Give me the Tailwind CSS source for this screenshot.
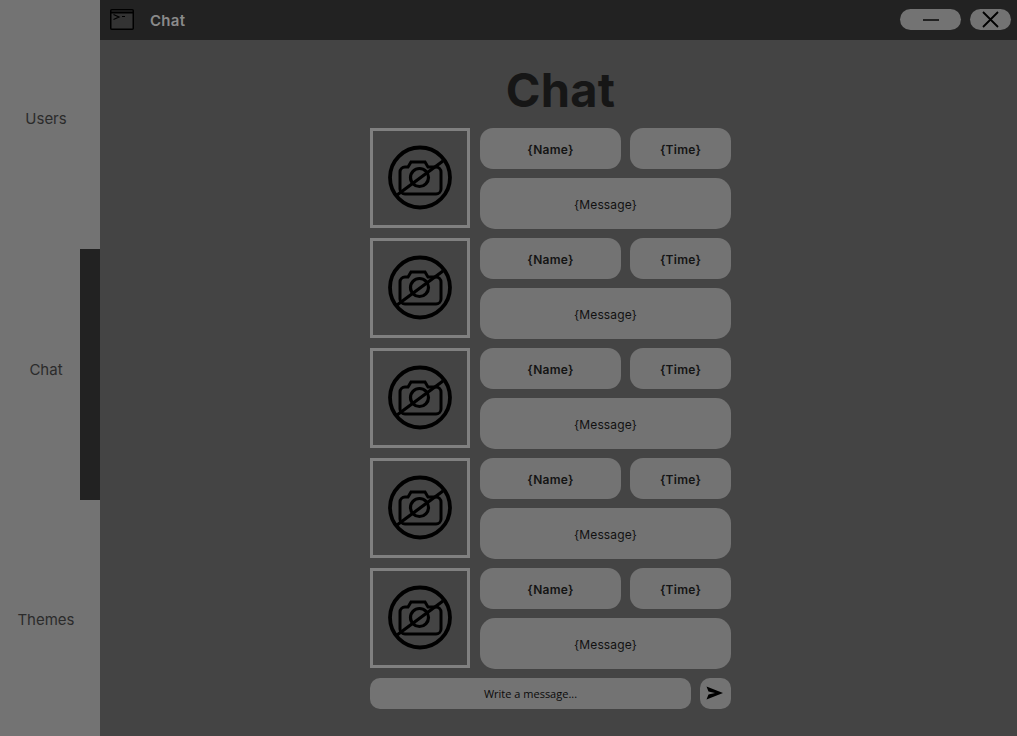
<!DOCTYPE html>
<html lang="en">
<head>
    <meta charset="UTF-8">
    <title>Chat</title>
    <script src="https://cdn.jsdelivr.net/npm/@tailwindcss/browser@4"></script>
</head>
<body class="bg-[#444444] font-['Inter','Noto_Sans',sans-serif] overflow-hidden">
    <div class="flex h-[736px] w-[1017px]">
        <!-- sidebar -->
        <nav class="w-[100px] h-full bg-[#737373] flex flex-col text-[15px] text-[#2b2b2b] shrink-0">
            <div class="h-[249px] flex items-center pr-2 pb-[11px]"><span class="w-full text-center">Users</span></div>
            <div class="h-[251px] flex items-center pr-2 pb-[9px] shadow-[inset_-20px_0_0_#222222]"><span class="w-full text-center">Chat</span></div>
            <div class="flex-1 flex items-center pr-2 pt-[4px]"><span class="w-full text-center">Themes</span></div>
        </nav>

        <div class="flex-1 flex flex-col">
            <!-- title bar -->
            <header class="h-10 bg-[#222222] flex items-center pl-[10px] pr-[6px] pb-[1px] shrink-0">
                <svg width="24" height="21" viewBox="0 0 24 21">
                    <rect x="0.75" y="0.75" width="22.5" height="19.5" rx="1" fill="#333333" stroke="#000" stroke-width="1.5"/>
                    <path d="M1 3.500H23" stroke="#000" stroke-width="2"/>
                    <path d="M3.500 5.500L9 8L3.500 10.500" fill="none" stroke="#000" stroke-width="1.200"/>
                    <path d="M12 7.500H15" stroke="#000" stroke-width="1"/>
                </svg>
                <span class="ml-4 mt-[4px] text-[15px] tracking-[0.02em] font-semibold text-[#8a8a8a]">Chat</span>
                <button class="ml-auto w-[61px] h-[21px] rounded-full bg-[#737373] flex items-center justify-center">
                    <span class="block w-4 h-[2px] bg-[#222222]"></span>
                </button>
                <button class="ml-[9px] w-[41px] h-[21px] rounded-full bg-[#737373] flex items-center justify-center">
                    <svg width="17" height="17" viewBox="0 0 17 17"><path d="M1 1L16 16M16 1L1 16" stroke="#000" stroke-width="1.800"/></svg>
                </button>
            </header>

            <!-- chat -->
            <main class="flex-1 pl-[270px]">
                <div class="w-[361px]">
                    <h1 class="h-[88px] pt-[20px] pl-5 text-center text-[47px] tracking-[0.005em] leading-[60px] font-bold text-[#161616]">Chat</h1>
                    <div class="flex flex-col gap-[10px]">
                        <div class="flex gap-[10px] h-[100px]">
                            <div class="w-[100px] h-[100px] border-[3px] border-[#808080] flex items-center justify-center shrink-0">
                                <svg width="66" height="66" viewBox="0 0 66 66" fill="none" stroke="#000">
                                    <circle cx="33" cy="32.500" r="30" stroke-width="3.800"/>
                                    <path d="M13 27a5 5 0 0 1 5-5h3l3-5h14l3 5h8a5 5 0 0 1 5 5v17a5 5 0 0 1-5 5H18a5 5 0 0 1-5-5z" stroke-width="3"/>
                                    <circle cx="32.500" cy="32.500" r="9" stroke-width="3.200"/>
                                    <path d="M10 50L56 16" stroke-width="3.200"/>
                                </svg>
                            </div>
                            <div class="flex-1 flex flex-col gap-[9px]">
                                <div class="flex gap-[9px]">
                                    <div class="w-[141px] h-[41px] shrink-0 rounded-[13px] bg-[#737373] flex items-center justify-center pt-[2px] text-[12px] tracking-[0.02em] font-semibold text-[#141414]">{Name}</div>
                                    <div class="flex-1 h-[41px] rounded-[13px] bg-[#737373] flex items-center justify-center pt-[2px] text-[12px] tracking-[0.02em] font-semibold text-[#141414]">{Time}</div>
                                </div>
                                <div class="h-[51px] shrink-0 rounded-[15px] bg-[#737373] flex items-center justify-center pt-[2px] text-[12px] tracking-[0.01em] text-[#111111]">{Message}</div>
                            </div>
                        </div>
                        <div class="flex gap-[10px] h-[100px]">
                            <div class="w-[100px] h-[100px] border-[3px] border-[#808080] flex items-center justify-center shrink-0">
                                <svg width="66" height="66" viewBox="0 0 66 66" fill="none" stroke="#000">
                                    <circle cx="33" cy="32.500" r="30" stroke-width="3.800"/>
                                    <path d="M13 27a5 5 0 0 1 5-5h3l3-5h14l3 5h8a5 5 0 0 1 5 5v17a5 5 0 0 1-5 5H18a5 5 0 0 1-5-5z" stroke-width="3"/>
                                    <circle cx="32.500" cy="32.500" r="9" stroke-width="3.200"/>
                                    <path d="M10 50L56 16" stroke-width="3.200"/>
                                </svg>
                            </div>
                            <div class="flex-1 flex flex-col gap-[9px]">
                                <div class="flex gap-[9px]">
                                    <div class="w-[141px] h-[41px] shrink-0 rounded-[13px] bg-[#737373] flex items-center justify-center pt-[2px] text-[12px] tracking-[0.02em] font-semibold text-[#141414]">{Name}</div>
                                    <div class="flex-1 h-[41px] rounded-[13px] bg-[#737373] flex items-center justify-center pt-[2px] text-[12px] tracking-[0.02em] font-semibold text-[#141414]">{Time}</div>
                                </div>
                                <div class="h-[51px] shrink-0 rounded-[15px] bg-[#737373] flex items-center justify-center pt-[2px] text-[12px] tracking-[0.01em] text-[#111111]">{Message}</div>
                            </div>
                        </div>
                        <div class="flex gap-[10px] h-[100px]">
                            <div class="w-[100px] h-[100px] border-[3px] border-[#808080] flex items-center justify-center shrink-0">
                                <svg width="66" height="66" viewBox="0 0 66 66" fill="none" stroke="#000">
                                    <circle cx="33" cy="32.500" r="30" stroke-width="3.800"/>
                                    <path d="M13 27a5 5 0 0 1 5-5h3l3-5h14l3 5h8a5 5 0 0 1 5 5v17a5 5 0 0 1-5 5H18a5 5 0 0 1-5-5z" stroke-width="3"/>
                                    <circle cx="32.500" cy="32.500" r="9" stroke-width="3.200"/>
                                    <path d="M10 50L56 16" stroke-width="3.200"/>
                                </svg>
                            </div>
                            <div class="flex-1 flex flex-col gap-[9px]">
                                <div class="flex gap-[9px]">
                                    <div class="w-[141px] h-[41px] shrink-0 rounded-[13px] bg-[#737373] flex items-center justify-center pt-[2px] text-[12px] tracking-[0.02em] font-semibold text-[#141414]">{Name}</div>
                                    <div class="flex-1 h-[41px] rounded-[13px] bg-[#737373] flex items-center justify-center pt-[2px] text-[12px] tracking-[0.02em] font-semibold text-[#141414]">{Time}</div>
                                </div>
                                <div class="h-[51px] shrink-0 rounded-[15px] bg-[#737373] flex items-center justify-center pt-[2px] text-[12px] tracking-[0.01em] text-[#111111]">{Message}</div>
                            </div>
                        </div>
                        <div class="flex gap-[10px] h-[100px]">
                            <div class="w-[100px] h-[100px] border-[3px] border-[#808080] flex items-center justify-center shrink-0">
                                <svg width="66" height="66" viewBox="0 0 66 66" fill="none" stroke="#000">
                                    <circle cx="33" cy="32.500" r="30" stroke-width="3.800"/>
                                    <path d="M13 27a5 5 0 0 1 5-5h3l3-5h14l3 5h8a5 5 0 0 1 5 5v17a5 5 0 0 1-5 5H18a5 5 0 0 1-5-5z" stroke-width="3"/>
                                    <circle cx="32.500" cy="32.500" r="9" stroke-width="3.200"/>
                                    <path d="M10 50L56 16" stroke-width="3.200"/>
                                </svg>
                            </div>
                            <div class="flex-1 flex flex-col gap-[9px]">
                                <div class="flex gap-[9px]">
                                    <div class="w-[141px] h-[41px] shrink-0 rounded-[13px] bg-[#737373] flex items-center justify-center pt-[2px] text-[12px] tracking-[0.02em] font-semibold text-[#141414]">{Name}</div>
                                    <div class="flex-1 h-[41px] rounded-[13px] bg-[#737373] flex items-center justify-center pt-[2px] text-[12px] tracking-[0.02em] font-semibold text-[#141414]">{Time}</div>
                                </div>
                                <div class="h-[51px] shrink-0 rounded-[15px] bg-[#737373] flex items-center justify-center pt-[2px] text-[12px] tracking-[0.01em] text-[#111111]">{Message}</div>
                            </div>
                        </div>
                        <div class="flex gap-[10px] h-[100px]">
                            <div class="w-[100px] h-[100px] border-[3px] border-[#808080] flex items-center justify-center shrink-0">
                                <svg width="66" height="66" viewBox="0 0 66 66" fill="none" stroke="#000">
                                    <circle cx="33" cy="32.500" r="30" stroke-width="3.800"/>
                                    <path d="M13 27a5 5 0 0 1 5-5h3l3-5h14l3 5h8a5 5 0 0 1 5 5v17a5 5 0 0 1-5 5H18a5 5 0 0 1-5-5z" stroke-width="3"/>
                                    <circle cx="32.500" cy="32.500" r="9" stroke-width="3.200"/>
                                    <path d="M10 50L56 16" stroke-width="3.200"/>
                                </svg>
                            </div>
                            <div class="flex-1 flex flex-col gap-[9px]">
                                <div class="flex gap-[9px]">
                                    <div class="w-[141px] h-[41px] shrink-0 rounded-[13px] bg-[#737373] flex items-center justify-center pt-[2px] text-[12px] tracking-[0.02em] font-semibold text-[#141414]">{Name}</div>
                                    <div class="flex-1 h-[41px] rounded-[13px] bg-[#737373] flex items-center justify-center pt-[2px] text-[12px] tracking-[0.02em] font-semibold text-[#141414]">{Time}</div>
                                </div>
                                <div class="h-[51px] shrink-0 rounded-[15px] bg-[#737373] flex items-center justify-center pt-[2px] text-[12px] tracking-[0.01em] text-[#111111]">{Message}</div>
                            </div>
                        </div>
                    </div>
                    <!-- input -->
                    <div class="flex gap-[9px] mt-[10px]">
                        <div class="w-[321px] h-[31px] rounded-[10px] bg-[#737373] flex items-center justify-center pt-[1px] text-[11px] text-[#0a0a0a] font-['Open_Sans',sans-serif]">Write a message...</div>
                        <button class="w-[31px] h-[31px] rounded-[10px] bg-[#737373] flex items-center justify-center pr-[2px] pb-[1px]">
                            <svg width="17" height="14" viewBox="0 0 17 14"><path d="M0.500 0.500L17 7L0.500 13.500L2.500 8.500L9 7L2.500 5.500Z" fill="#000"/></svg>
                        </button>
                    </div>
                </div>
            </main>
        </div>
    </div>
</body>
</html>
